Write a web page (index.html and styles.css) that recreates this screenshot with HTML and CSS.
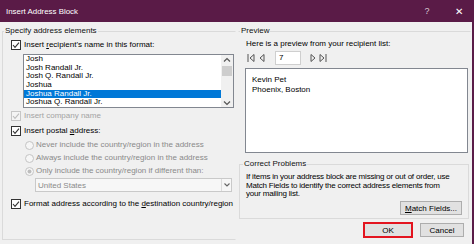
FILE: index.html
```html
<!DOCTYPE html>
<html>
<head>
<meta charset="utf-8">
<link rel="stylesheet" href="styles.css">
</head>
<body>
<div class="dialog">
  <div class="titlebar">
    <span class="title">Insert Address Block</span>
    <span class="tb-btns"><span class="help">?</span><span class="close">✕</span></span>
  </div>
  <div class="body">
    <fieldset class="group left">
      <legend>Specify address elements</legend>
      <label class="check row-name">
        <svg class="box" width="10" height="10" viewBox="0 0 10 10"><rect x="0.5" y="0.5" width="9" height="9" fill="#fff" stroke="#333"/><polyline points="2,5 4,7.3 8,2.6" fill="none" stroke="#333" stroke-width="1.1"/></svg>
        <span>Insert <u>r</u>ecipient's name in this format:</span>
      </label>
      <div class="listbox">
        <ul class="items">
          <li>Josh</li>
          <li>Josh Randall Jr.</li>
          <li>Josh Q. Randall Jr.</li>
          <li>Joshua</li>
          <li class="sel">Joshua Randall Jr.</li>
          <li>Joshua Q. Randall Jr.</li>
        </ul>
        <div class="scrollbar">
          <svg class="sb-arrow" width="12" height="8" viewBox="0 0 12 8"><polyline points="3,5.5 6,2.5 9,5.5" fill="none" stroke="#555" stroke-width="1.2"/></svg>
          <div class="track"><div class="thumb"></div></div>
          <svg class="sb-arrow" width="12" height="8" viewBox="0 0 12 8"><polyline points="3,2.5 6,5.5 9,2.5" fill="none" stroke="#555" stroke-width="1.2"/></svg>
        </div>
      </div>
      <label class="check disabled row-company">
        <svg class="box" width="10" height="10" viewBox="0 0 10 10"><rect x="0.5" y="0.5" width="9" height="9" fill="#f4f4f4" stroke="#c6c6c6"/><polyline points="2,5 4,7.3 8,2.6" fill="none" stroke="#bdbdbd" stroke-width="1.1"/></svg>
        <span>Insert company name</span>
      </label>
      <label class="check row-postal">
        <svg class="box" width="10" height="10" viewBox="0 0 10 10"><rect x="0.5" y="0.5" width="9" height="9" fill="#fff" stroke="#333"/><polyline points="2,5 4,7.3 8,2.6" fill="none" stroke="#333" stroke-width="1.1"/></svg>
        <span>Insert postal <u>a</u>ddress:</span>
      </label>
      <div class="radios">
        <label class="radio r1">
          <svg width="9" height="9" viewBox="0 0 9 9"><circle cx="4.5" cy="4.5" r="4" fill="#f6f6f6" stroke="#c4c4c4"/></svg>
          <span>Never include the country/region in the address</span>
        </label>
        <label class="radio">
          <svg width="9" height="9" viewBox="0 0 9 9"><circle cx="4.5" cy="4.5" r="4" fill="#f6f6f6" stroke="#c4c4c4"/></svg>
          <span>Always include the country/region in the address</span>
        </label>
        <label class="radio">
          <svg width="9" height="9" viewBox="0 0 9 9"><circle cx="4.5" cy="4.5" r="4" fill="#f6f6f6" stroke="#c4c4c4"/><circle cx="4.5" cy="4.5" r="2" fill="#bdbdbd"/></svg>
          <span>Only include the country/region if different than:</span>
        </label>
        <div class="combo">
          <span class="combo-text">United States</span>
          <span class="combo-btn"><svg width="8" height="6" viewBox="0 0 8 6"><polyline points="1.5,1.5 4,4 6.5,1.5" fill="none" stroke="#666" stroke-width="1.1"/></svg></span>
        </div>
      </div>
      <label class="check row-format">
        <svg class="box" width="10" height="10" viewBox="0 0 10 10"><rect x="0.5" y="0.5" width="9" height="9" fill="#fff" stroke="#333"/><polyline points="2,5 4,7.3 8,2.6" fill="none" stroke="#333" stroke-width="1.1"/></svg>
        <span>Format address according to the <u>d</u>estination country/region</span>
      </label>
    </fieldset>
    <div class="rightcol">
      <fieldset class="group preview">
        <legend>Preview</legend>
        <div class="hint">Here is a preview from your recipient list:</div>
        <div class="nav">
          <svg class="nav-first" width="8" height="10" viewBox="0 0 8 10"><line x1="1" y1="1" x2="1" y2="9" stroke="#555"/><polygon points="7,1.5 3,5 7,8.5" fill="none" stroke="#555" stroke-linejoin="round"/></svg>
          <svg class="nav-prev" width="6" height="10" viewBox="0 0 6 10"><polygon points="5,1.5 1,5 5,8.5" fill="none" stroke="#555" stroke-linejoin="round"/></svg>
          <span class="nav-input">7</span>
          <svg class="nav-next" width="6" height="10" viewBox="0 0 6 10"><polygon points="1,1.5 5,5 1,8.5" fill="none" stroke="#555" stroke-linejoin="round"/></svg>
          <svg class="nav-last" width="8" height="10" viewBox="0 0 8 10"><polygon points="1,1.5 5,5 1,8.5" fill="none" stroke="#555" stroke-linejoin="round"/><line x1="7" y1="1" x2="7" y2="9" stroke="#555"/></svg>
        </div>
        <div class="previewbox">
          <div>Kevin Pet</div>
          <div>Phoenix, Boston</div>
        </div>
      </fieldset>
      <fieldset class="group problems">
        <legend>Correct Problems</legend>
        <p class="problems-text">If items in your address block are missing or out of order, use Match Fields to identify the correct address elements from<br>your mailing list.</p>
        <div class="mf-row"><span class="btn mf"><u>M</u>atch Fields...</span></div>
      </fieldset>
      <div class="actions">
        <span class="btn ok">OK</span>
        <span class="btn cancel">Cancel</span>
      </div>
    </div>
  </div>
</div>
</body>
</html>
```
FILE: styles.css
```css
* { box-sizing: border-box; }
html, body { margin: 0; padding: 0; }
body {
  width: 474px;
  height: 244px;
  overflow: hidden;
  font-family: "Liberation Sans", Arial, sans-serif;
  font-size: 8px;
  color: #000;
  background: #f0f0f0;
}
.dialog {
  width: 474px;
  height: 244px;
  display: flex;
  flex-direction: column;
  border-right: 2px solid #5a1b47;
}
.titlebar {
  height: 22px;
  flex: none;
  background: #5a1b47;
  color: #fff;
  display: flex;
  align-items: center;
  justify-content: space-between;
  padding-left: 6px;
}
.title { font-size: 7.9px; }
.tb-btns { display: flex; align-items: center; }
.help { width: 12px; text-align: center; font-size: 9px; color: #d8c8d2; margin-right: 20px; }
.close { width: 12px; text-align: center; font-size: 10px; margin-right: 7px; }

.body {
  flex: 1;
  display: flex;
  padding: 4px 0 0 2px;
  gap: 2px;
}
.group {
  margin: 0;
  padding: 0;
  border: 1px solid #dadada;
  min-width: 0;
}
.group legend {
  padding: 0 1px;
  margin-left: 1px;
  height: 10px;
  line-height: 10px;
  color: #111;
}
.left {
  width: 234px;
  height: 214px;
  display: flex;
  flex-direction: column;
  border-right-color: transparent;
}
.check {
  display: flex;
  align-items: center;
  height: 10px;
  line-height: 10px;
  padding-left: 8px;
  gap: 3px;
  white-space: nowrap;
}
.check .box { flex: none; }
.disabled { color: #a3a3a3; }
.row-name { margin-top: 4px; }
.listbox {
  margin: 4px 0 0 20px;
  width: 211px;
  height: 54px;
  border: 1px solid #828790;
  background: #fff;
  display: flex;
}
.items {
  list-style: none;
  margin: 0;
  padding: 0;
  flex: 1;
}
.items li {
  height: 8.7px;
  line-height: 8.7px;
  padding-left: 2px;
  white-space: nowrap;
  color: #000;
}
.items li.sel { background: #0078d7; color: #fff; }
.scrollbar {
  width: 12px;
  display: flex;
  flex-direction: column;
  background: #f0f0f0;
}
.sb-arrow { flex: none; margin-top: 1px; }
.track { flex: 1; padding: 2px 1px 0 1px; }
.thumb { height: 10px; background: #cdcdcd; }
.row-company { margin-top: 3px; }
.row-postal { margin-top: 5px; }
.radios {
  display: flex;
  flex-direction: column;
  padding-left: 22px;
}
.radio {
  display: flex;
  align-items: center;
  gap: 2px;
  height: 10px;
  line-height: 10px;
  margin-top: 3px;
  color: #8a8a8a;
  white-space: nowrap;
}
.radio.r1 { margin-top: 4px; }
.combo {
  margin-top: 2px;
  margin-left: 10px;
  width: 197px;
  height: 14px;
  border: 1px solid #c9c9c9;
  background: #f7f7f7;
  display: flex;
  align-items: center;
  justify-content: space-between;
  color: #8a8a8a;
  padding-left: 2px;
}
.combo-btn {
  width: 10px;
  height: 12px;
  display: flex;
  align-items: center;
  justify-content: center;
  border-left: 1px solid #dcdcdc;
  background: #f7f7f7;
}
.row-format { margin-top: 7px; }

.rightcol {
  width: 233px;
  display: flex;
  flex-direction: column;
}
.preview {
  height: 131px;
  border-color: transparent;
  border-top-color: #dadada;
}
.hint { margin: 3px 0 0 7px; height: 10px; line-height: 10px; white-space: nowrap; }
.nav {
  margin: 1px 0 0 8px;
  height: 15px;
  display: flex;
  align-items: center;
}
.nav-prev { margin-left: 4px; }
.nav-input {
  margin-left: 10px;
  width: 26px;
  height: 14px;
  border: 1px solid #cfcfcf;
  background: #fff;
  line-height: 12px;
  padding-left: 3px;
}
.nav-next { margin-left: 9px; }
.nav-last { margin-left: 3px; }
.previewbox {
  margin: 3px 0 0 6px;
  width: 223px;
  height: 85px;
  border: 1px solid #828790;
  background: #fff;
  padding: 6px 0 0 6px;
  line-height: 9.5px;
}
.problems {
  margin: 2px 2px 0 1px;
  height: 60px;
}
.problems legend { margin-left: 3px; }
.problems-text {
  margin: 4px 2px 0 6px;
  line-height: 8.7px;
  letter-spacing: -0.2px;
}
.mf-row {
  display: flex;
  justify-content: flex-end;
  padding-right: 6px;
  margin-top: 2px;
}
.btn {
  display: flex;
  align-items: center;
  justify-content: center;
  background: #e1e1e1;
  border: 1px solid #adadad;
  color: #000;
}
.mf { width: 62px; height: 14px; }
.actions {
  display: flex;
  justify-content: flex-end;
  align-items: center;
  gap: 7px;
  margin-top: 3px;
  padding-right: 7px;
}
.ok {
  width: 50px;
  height: 16px;
  border: 2px solid #e3141f;
}
.cancel { width: 44px; height: 14px; }
```
